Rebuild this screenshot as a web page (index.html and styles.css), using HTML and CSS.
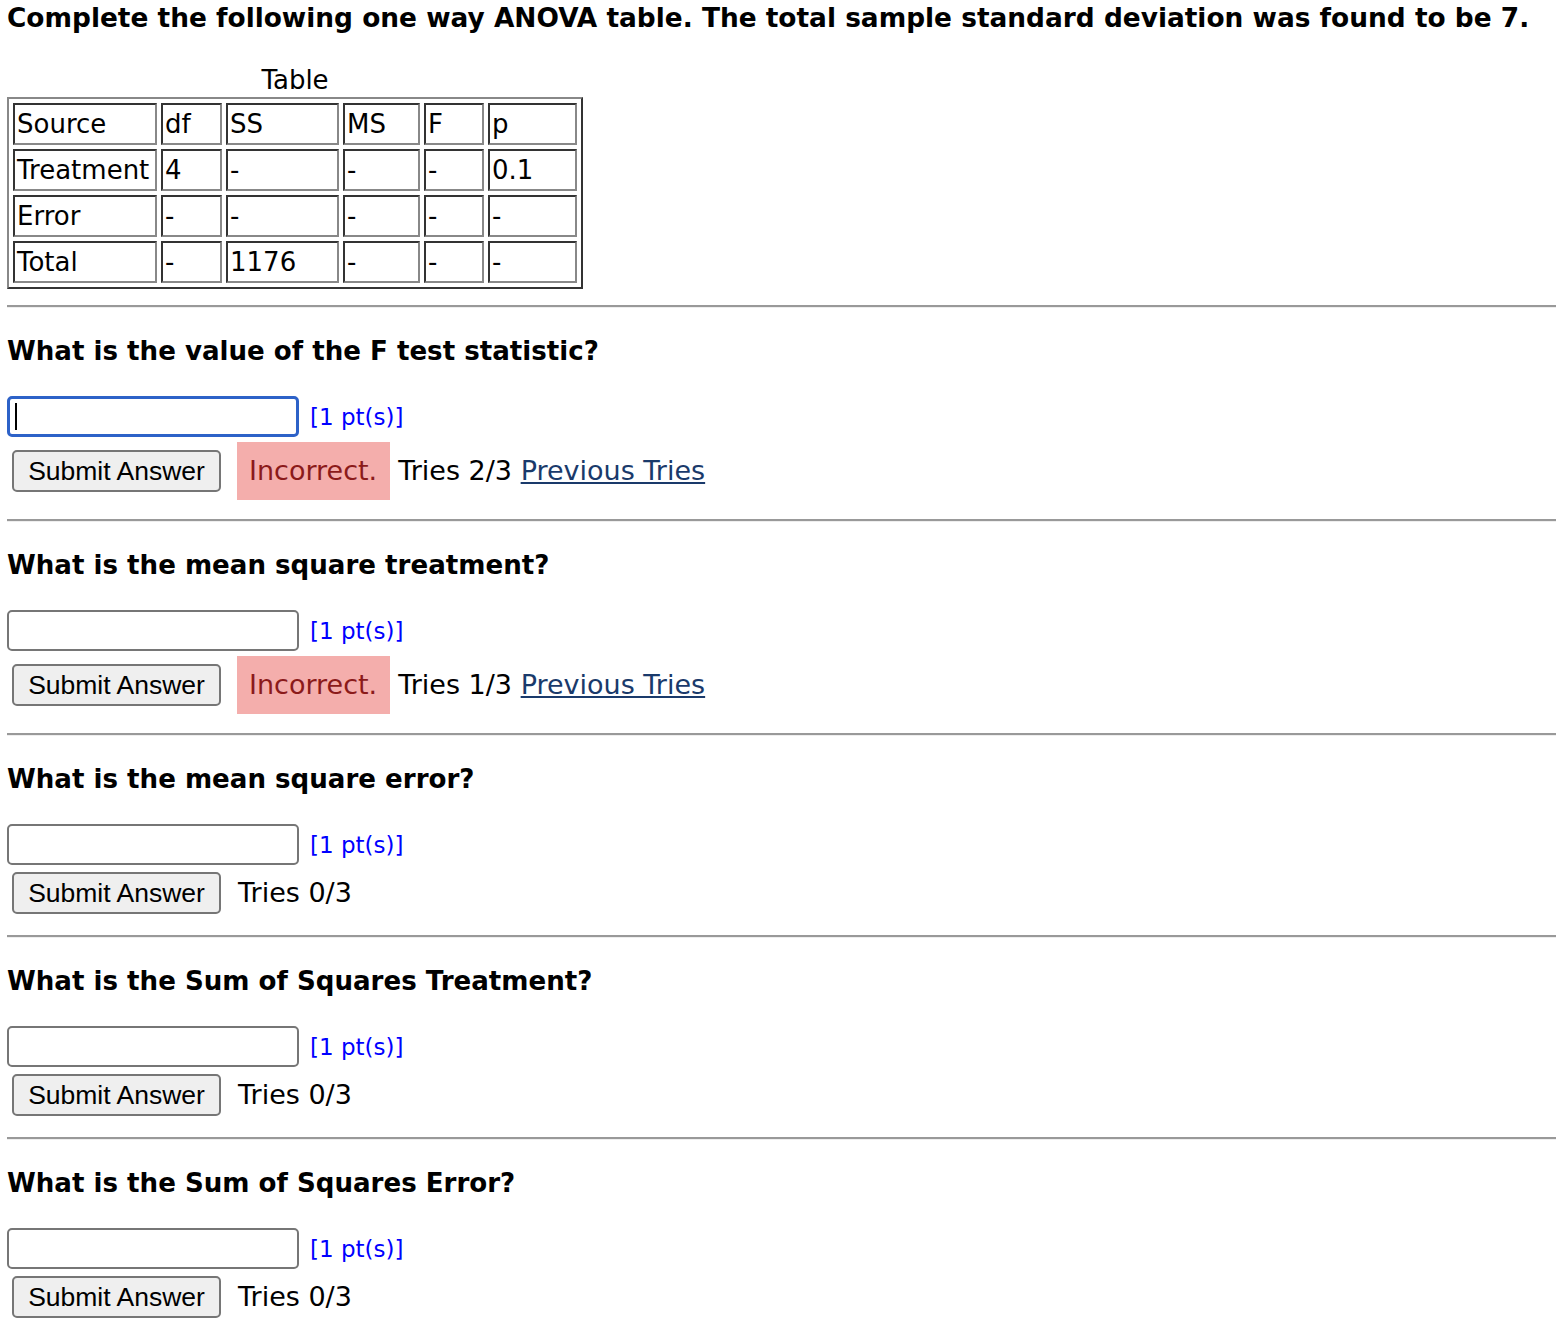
FILE: index.html
```html
<!DOCTYPE html>
<html lang="en">
<head>
    <meta charset="UTF-8">
    <title>One way ANOVA</title>
    <link rel="stylesheet" href="styles.css">
</head>
<body>
    <div class="problem">
        <p class="intro"><b>Complete the following one way ANOVA table. The total sample standard deviation was found to be 7.</b></p>

        <table class="anova" border="1">
            <caption>Table</caption>
            <tr><td class="c-src">Source</td><td class="c-df">df</td><td class="c-ss">SS</td><td class="c-ms">MS</td><td class="c-f">F</td><td class="c-p">p</td></tr>
            <tr><td>Treatment</td><td>4</td><td>-</td><td>-</td><td>-</td><td>0.1</td></tr>
            <tr><td>Error</td><td>-</td><td>-</td><td>-</td><td>-</td><td>-</td></tr>
            <tr><td>Total</td><td>-</td><td>1176</td><td>-</td><td>-</td><td>-</td></tr>
        </table>

        <div class="part tried">
            <hr>
            <p class="question"><b>What is the value of the F test statistic?</b></p>
            <div class="answer-row">
                <span class="field focused"><input type="text" class="answer"><span class="caret"></span></span>
                <span class="pts">[1 pt(s)]</span>
            </div>
            <div class="submit-row">
                <button>Submit Answer</button>
                <span class="incorrect">Incorrect.</span>
                <span class="tries">Tries 2/3 <a href="#">Previous Tries</a></span>
            </div>
        </div>

        <div class="part tried">
            <hr>
            <p class="question"><b>What is the mean square treatment?</b></p>
            <div class="answer-row">
                <span class="field"><input type="text" class="answer"></span>
                <span class="pts">[1 pt(s)]</span>
            </div>
            <div class="submit-row">
                <button>Submit Answer</button>
                <span class="incorrect">Incorrect.</span>
                <span class="tries">Tries 1/3 <a href="#">Previous Tries</a></span>
            </div>
        </div>

        <div class="part">
            <hr>
            <p class="question"><b>What is the mean square error?</b></p>
            <div class="answer-row">
                <span class="field"><input type="text" class="answer"></span>
                <span class="pts">[1 pt(s)]</span>
            </div>
            <div class="submit-row">
                <button>Submit Answer</button>
                <span class="tries">Tries 0/3</span>
            </div>
        </div>

        <div class="part">
            <hr>
            <p class="question"><b>What is the Sum of Squares Treatment?</b></p>
            <div class="answer-row">
                <span class="field"><input type="text" class="answer"></span>
                <span class="pts">[1 pt(s)]</span>
            </div>
            <div class="submit-row">
                <button>Submit Answer</button>
                <span class="tries">Tries 0/3</span>
            </div>
        </div>

        <div class="part">
            <hr>
            <p class="question"><b>What is the Sum of Squares Error?</b></p>
            <div class="answer-row">
                <span class="field"><input type="text" class="answer"></span>
                <span class="pts">[1 pt(s)]</span>
            </div>
            <div class="submit-row">
                <button>Submit Answer</button>
                <span class="tries">Tries 0/3</span>
            </div>
        </div>
    </div>
</body>
</html>
```

FILE: styles.css
```css
body {
    font-family: "DejaVu Sans", Verdana, sans-serif;
    font-size: 26px;
    line-height: 30px;
    color: #000;
    background: #fff;
    margin: 0;
    overflow: hidden;
}

.problem {
    padding: 3px 0 0 7px;
}

.intro {
    margin: 0 0 32px 0;
    font-size: 26.4px;
}

.anova {
    border-collapse: separate;
    border-spacing: 4px;
    border: 2px solid;
    border-color: #888 #333 #333 #888;
    margin-bottom: 16px;
}

.anova caption {
    line-height: 30px;
    padding-bottom: 2px;
}

.anova td {
    border: 2px solid;
    border-color: #333 #888 #888 #333;
    height: 38px;
    padding: 0 2px;
    white-space: nowrap;
}

.c-src { width: 136px; }
.c-df { width: 53px; }
.c-ss { width: 105px; }
.c-ms { width: 69px; }
.c-f { width: 52px; }
.c-p { width: 81px; }

hr {
    margin: 0;
    border: none;
    border-top: 2px solid #999;
    border-bottom: 1px solid #eee;
    height: 0;
}

.question {
    margin: 28px 0 30px 0;
    font-size: 26.1px;
}

.answer-row {
    display: flex;
    align-items: center;
    gap: 11px;
    height: 41px;
}

.field {
    position: relative;
    display: inline-block;
    height: 41px;
}

.answer {
    display: block;
    width: 292px;
    height: 41px;
    box-sizing: border-box;
    border: 2px solid #767676;
    border-radius: 5px;
    margin: 0;
    padding: 0 6px;
    font-size: 24px;
    background: #fff;
}

.focused .answer {
    border: 3px solid #2d62c8;
    outline: none;
}

.caret {
    position: absolute;
    left: 8px;
    top: 7px;
    width: 2px;
    height: 27px;
    background: #000;
}

.pts {
    color: #0000ff;
    font-size: 23px;
}

.submit-row {
    display: flex;
    align-items: center;
    margin: 7px 0 21px 0;
    font-size: 27px;
    white-space: pre;
}

.tried .submit-row {
    margin: 5px 0 19px 0;
}

button {
    font-family: "Liberation Sans", Arial, sans-serif;
    font-size: 26.5px;
    width: 209px;
    height: 42px;
    margin: 0 17px 0 5px;
    padding: 0;
    color: #000;
    background: #efefef;
    border: 2px solid #767676;
    border-radius: 5px;
}

.tried button {
    margin-right: 16px;
}

.incorrect {
    background: #f4aeac;
    color: #8b1a1a;
    padding: 14px 13px 14px 12px;
    margin-right: 8px;
}

.tries a {
    color: #1a3a6b;
}
```
